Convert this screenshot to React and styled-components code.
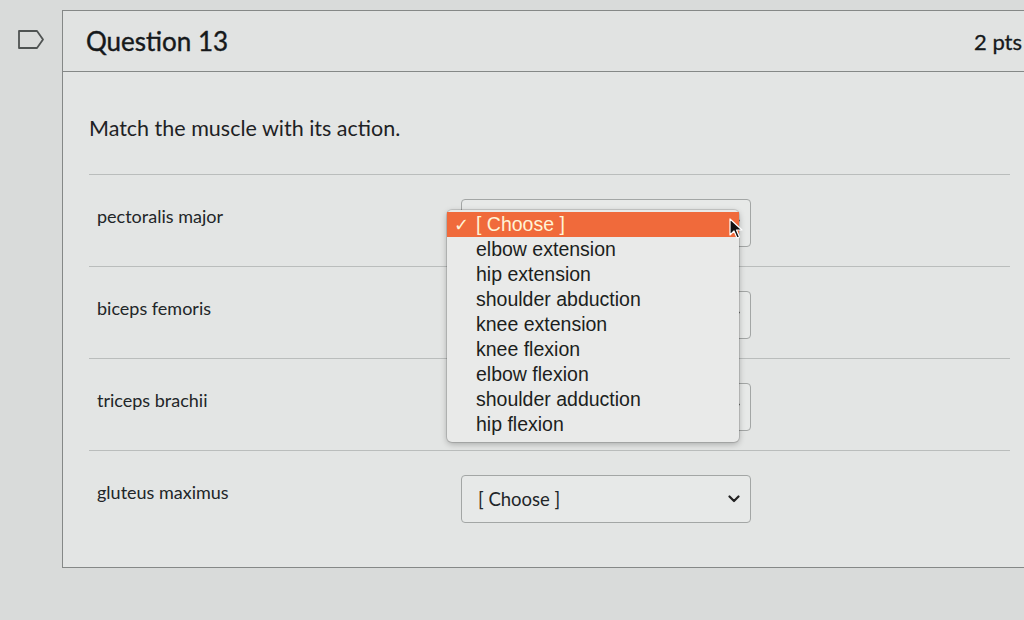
import React from "react";
import styled, { createGlobalStyle } from "styled-components";

const Global = createGlobalStyle`
  html, body { margin: 0; padding: 0; }
  body {
    background: #d9dbda;
    font-family: Lato, "Open Sans", sans-serif;
    color: #222628;
    width: 1024px;
    height: 620px;
    overflow: hidden;
  }
`;

const Page = styled.div`
  display: flex;
  padding-top: 10px;
  height: 620px;
  box-sizing: border-box;
`;

const FlagCol = styled.div`
  width: 62px;
  flex: none;
  padding: 19px 0 0 17px;
  box-sizing: border-box;
`;

const Card = styled.div`
  flex: 1;
  height: 556px;
  background: #e3e5e4;
  border: 1px solid #858887;
  border-right: none;
  display: flex;
  flex-direction: column;
`;

const Header = styled.div`
  height: 61px;
  box-sizing: border-box;
  border-bottom: 1px solid #858887;
  background: #e1e3e2;
  display: flex;
  align-items: center;
  justify-content: space-between;
  padding: 0 2px 0 23px;
`;

const Title = styled.h2`
  margin: 0;
  font-size: 26px;
  font-weight: 400;
  color: #16191b;
  -webkit-text-stroke: 0.4px #16191b;
`;

const Points = styled.span`
  font-size: 22px;
  font-weight: 400;
  color: #16191b;
  -webkit-text-stroke: 0.3px #16191b;
`;

const Body = styled.div`
  padding: 43px 14px 0 26px;
`;

const Prompt = styled.p`
  margin: 0 0 33px;
  font-size: 21.5px;
  color: #1e2224;
`;

const Answers = styled.div`
  border-top: 1px solid #babdbc;
`;

const Row = styled.div`
  display: grid;
  grid-template-columns: 372px 290px;
  align-items: start;
  height: 92px;
  box-sizing: border-box;
  padding-top: 24px;
  border-bottom: ${(p) => (p.$last ? "none" : "1px solid #babdbc")};
`;

const Label = styled.div`
  padding: 6px 0 0 8px;
  font-size: 18px;
  color: #222628;
`;

const SelectWrap = styled.div`
  position: relative;
`;

const SelectBox = styled.div`
  height: 48px;
  box-sizing: border-box;
  border: 1px solid #a3a6a5;
  border-radius: 4px;
  background: #e7e9e8;
  display: flex;
  align-items: center;
  justify-content: space-between;
  padding: 0 10px 0 16px;
  font-size: 18.5px;
  color: #222628;
`;

const SelectText = styled.span`
  visibility: ${(p) => (p.$covered ? "hidden" : "visible")};
`;

const Popup = styled.div`
  position: absolute;
  left: -14px;
  top: 11px;
  width: 292px;
  padding: 2px 0 5px;
  background: #e9eae9;
  border-radius: 5px;
  box-shadow: 0 2px 6px rgba(0, 0, 0, 0.28), 0 0 0 1px rgba(0, 0, 0, 0.12);
  font-family: "Liberation Sans", Arial, sans-serif;
  font-size: 19.5px;
  z-index: 5;
`;

const Option = styled.div`
  height: 25px;
  display: flex;
  align-items: center;
  padding-left: ${(p) => (p.$selected ? "7px" : "29px")};
  background: ${(p) => (p.$selected ? "#f06a3b" : "transparent")};
  color: ${(p) => (p.$selected ? "#fff3d6" : "#1c1e20")};
  gap: 7px;
  white-space: nowrap;
`;

const Check = styled.span`
  font-size: 18px;
  width: 15px;
`;

const Cursor = styled.svg`
  position: absolute;
  left: 268px;
  top: 19px;
  z-index: 6;
`;

function Chevron() {
  return (
    <svg width="12" height="8" viewBox="0 0 12 8">
      <path d="M1.5 1.5 L6 6 L10.5 1.5" fill="none" stroke="#222" strokeWidth="2.2" strokeLinecap="round" strokeLinejoin="round" />
    </svg>
  );
}

function Flag() {
  return (
    <svg width="28" height="21" viewBox="0 0 28 21">
      <path d="M2 2 H20 L26 10.5 L20 19 H2 Z" fill="none" stroke="#4f5352" strokeWidth="1.8" strokeLinejoin="round" />
    </svg>
  );
}

const options = [
  "elbow extension",
  "hip extension",
  "shoulder abduction",
  "knee extension",
  "knee flexion",
  "elbow flexion",
  "shoulder adduction",
  "hip flexion",
];

const muscles = ["pectoralis major", "biceps femoris", "triceps brachii", "gluteus maximus"];

export default function App() {
  return (
    <>
      <Global />
      <Page>
        <FlagCol>
          <Flag />
        </FlagCol>
        <Card>
          <Header>
            <Title>Question 13</Title>
            <Points>2 pts</Points>
          </Header>
          <Body>
            <Prompt>Match the muscle with its action.</Prompt>
            <Answers>
              {muscles.map((m, i) => (
                <Row key={m} $last={i === muscles.length - 1}>
                  <Label>{m}</Label>
                  <SelectWrap>
                    <SelectBox>
                      <SelectText $covered={i < 3}>[ Choose ]</SelectText>
                      <Chevron />
                    </SelectBox>
                    {i === 0 && (
                      <>
                        <Popup>
                          <Option $selected>
                            <Check>✓</Check>[ Choose ]
                          </Option>
                          {options.map((o) => (
                            <Option key={o}>{o}</Option>
                          ))}
                        </Popup>
                        <Cursor width="14" height="22" viewBox="0 0 14 22">
                          <path d="M1 1 L1 17 L5 13 L8 20 L10.5 19 L7.5 12 L13 12 Z" fill="#111" stroke="#fff" strokeWidth="1.2" strokeLinejoin="round" />
                        </Cursor>
                      </>
                    )}
                  </SelectWrap>
                </Row>
              ))}
            </Answers>
          </Body>
        </Card>
      </Page>
    </>
  );
}
